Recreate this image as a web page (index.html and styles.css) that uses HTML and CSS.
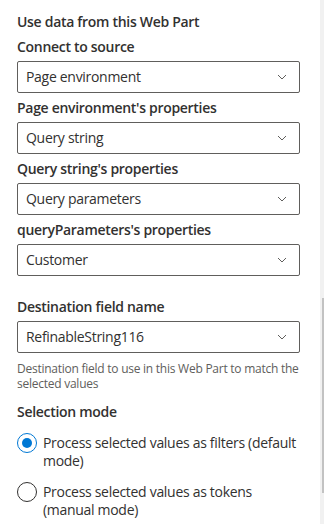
FILE: index.html
```html
<!DOCTYPE html>
<html>
<head>
    <link rel="stylesheet" href="styles.css">
</head>
<body>
    <div class="pane">
        <div class="panel">
            <div class="heading">Use data from this Web Part</div>

            <div class="field">
                <div class="label">Connect to source</div>
                <div class="dropdown">
                    <span class="dropdown-title">Page environment</span>
                    <svg class="chevron" width="10" height="6" viewBox="0 0 10 6"><path d="M1 1 L5 5 L9 1" fill="none" stroke="#605e5c" stroke-width="1"/></svg>
                </div>
            </div>

            <div class="field">
                <div class="label">Page environment's properties</div>
                <div class="dropdown">
                    <span class="dropdown-title">Query string</span>
                    <svg class="chevron" width="10" height="6" viewBox="0 0 10 6"><path d="M1 1 L5 5 L9 1" fill="none" stroke="#605e5c" stroke-width="1"/></svg>
                </div>
            </div>

            <div class="field">
                <div class="label">Query string's properties</div>
                <div class="dropdown">
                    <span class="dropdown-title">Query parameters</span>
                    <svg class="chevron" width="10" height="6" viewBox="0 0 10 6"><path d="M1 1 L5 5 L9 1" fill="none" stroke="#605e5c" stroke-width="1"/></svg>
                </div>
            </div>

            <div class="field">
                <div class="label">queryParameters's properties</div>
                <div class="dropdown">
                    <span class="dropdown-title">Customer</span>
                    <svg class="chevron" width="10" height="6" viewBox="0 0 10 6"><path d="M1 1 L5 5 L9 1" fill="none" stroke="#605e5c" stroke-width="1"/></svg>
                </div>
            </div>

            <div class="field field-spaced">
                <div class="label">Destination field name</div>
                <div class="dropdown">
                    <span class="dropdown-title">RefinableString116</span>
                    <svg class="chevron" width="10" height="6" viewBox="0 0 10 6"><path d="M1 1 L5 5 L9 1" fill="none" stroke="#605e5c" stroke-width="1"/></svg>
                </div>
                <div class="description">Destination field to use in this Web Part to match the selected values</div>
            </div>

            <div class="choice-group">
                <div class="label">Selection mode</div>
                <div class="option option-checked">
                    <span class="circle"></span>
                    <span class="option-text">Process selected values as filters (default mode)</span>
                </div>
                <div class="option">
                    <span class="circle"></span>
                    <span class="option-text">Process selected values as tokens (manual mode)</span>
                </div>
            </div>
        </div>
        <div class="scrollbar">
            <div class="thumb"></div>
        </div>
    </div>
</body>
</html>
```

FILE: styles.css
```css
html, body {
    margin: 0;
    padding: 0;
    background: #ffffff;
}
body {
    width: 324px;
    height: 524px;
    overflow: hidden;
    font-family: "Open Sans", "Noto Sans", sans-serif;
    color: #323130;
    font-size: 14px;
    letter-spacing: -0.3px;
}
.pane {
    display: flex;
    height: 524px;
}
.panel {
    flex: 1;
    padding: 12px 20px 0 17px;
}
.heading {
    font-weight: 600;
    line-height: 20px;
}
.label {
    font-weight: 600;
    line-height: 20px;
    padding: 5px 0 4px;
}
.field-spaced {
    margin-top: 16px;
}
.dropdown {
    height: 32px;
    box-sizing: border-box;
    border: 1px solid #605e5c;
    border-radius: 2px;
    display: flex;
    align-items: center;
    justify-content: space-between;
    padding: 0 8px 0 8px;
}
.dropdown-title {
    line-height: 30px;
}
.chevron {
    margin-right: 4px;
}
.description {
    font-size: 12px;
    line-height: 15px;
    letter-spacing: -0.25px;
    color: #605e5c;
    margin-top: 8px;
}
.choice-group {
    margin-top: 6px;
}
.option {
    display: flex;
    align-items: flex-start;
    gap: 6px;
    margin-top: 7px;
}
.option + .option {
    margin-top: 12px;
}
.circle {
    flex: none;
    width: 20px;
    height: 20px;
    box-sizing: border-box;
    border: 1px solid #323130;
    border-radius: 50%;
    position: relative;
}
.option-checked .circle {
    border-color: #0078d4;
}
.option-checked .circle::after {
    content: "";
    position: absolute;
    left: 4px;
    top: 4px;
    width: 10px;
    height: 10px;
    border-radius: 50%;
    background: #0078d4;
}
.option-text {
    line-height: 18px;
    padding-top: 1px;
}
.scrollbar {
    width: 4px;
    background: #f1f1f1;
    display: flex;
    justify-content: flex-end;
}
.thumb {
    width: 2px;
    height: 195px;
    margin-top: 298px;
    background: #c2c2c2;
}
```
